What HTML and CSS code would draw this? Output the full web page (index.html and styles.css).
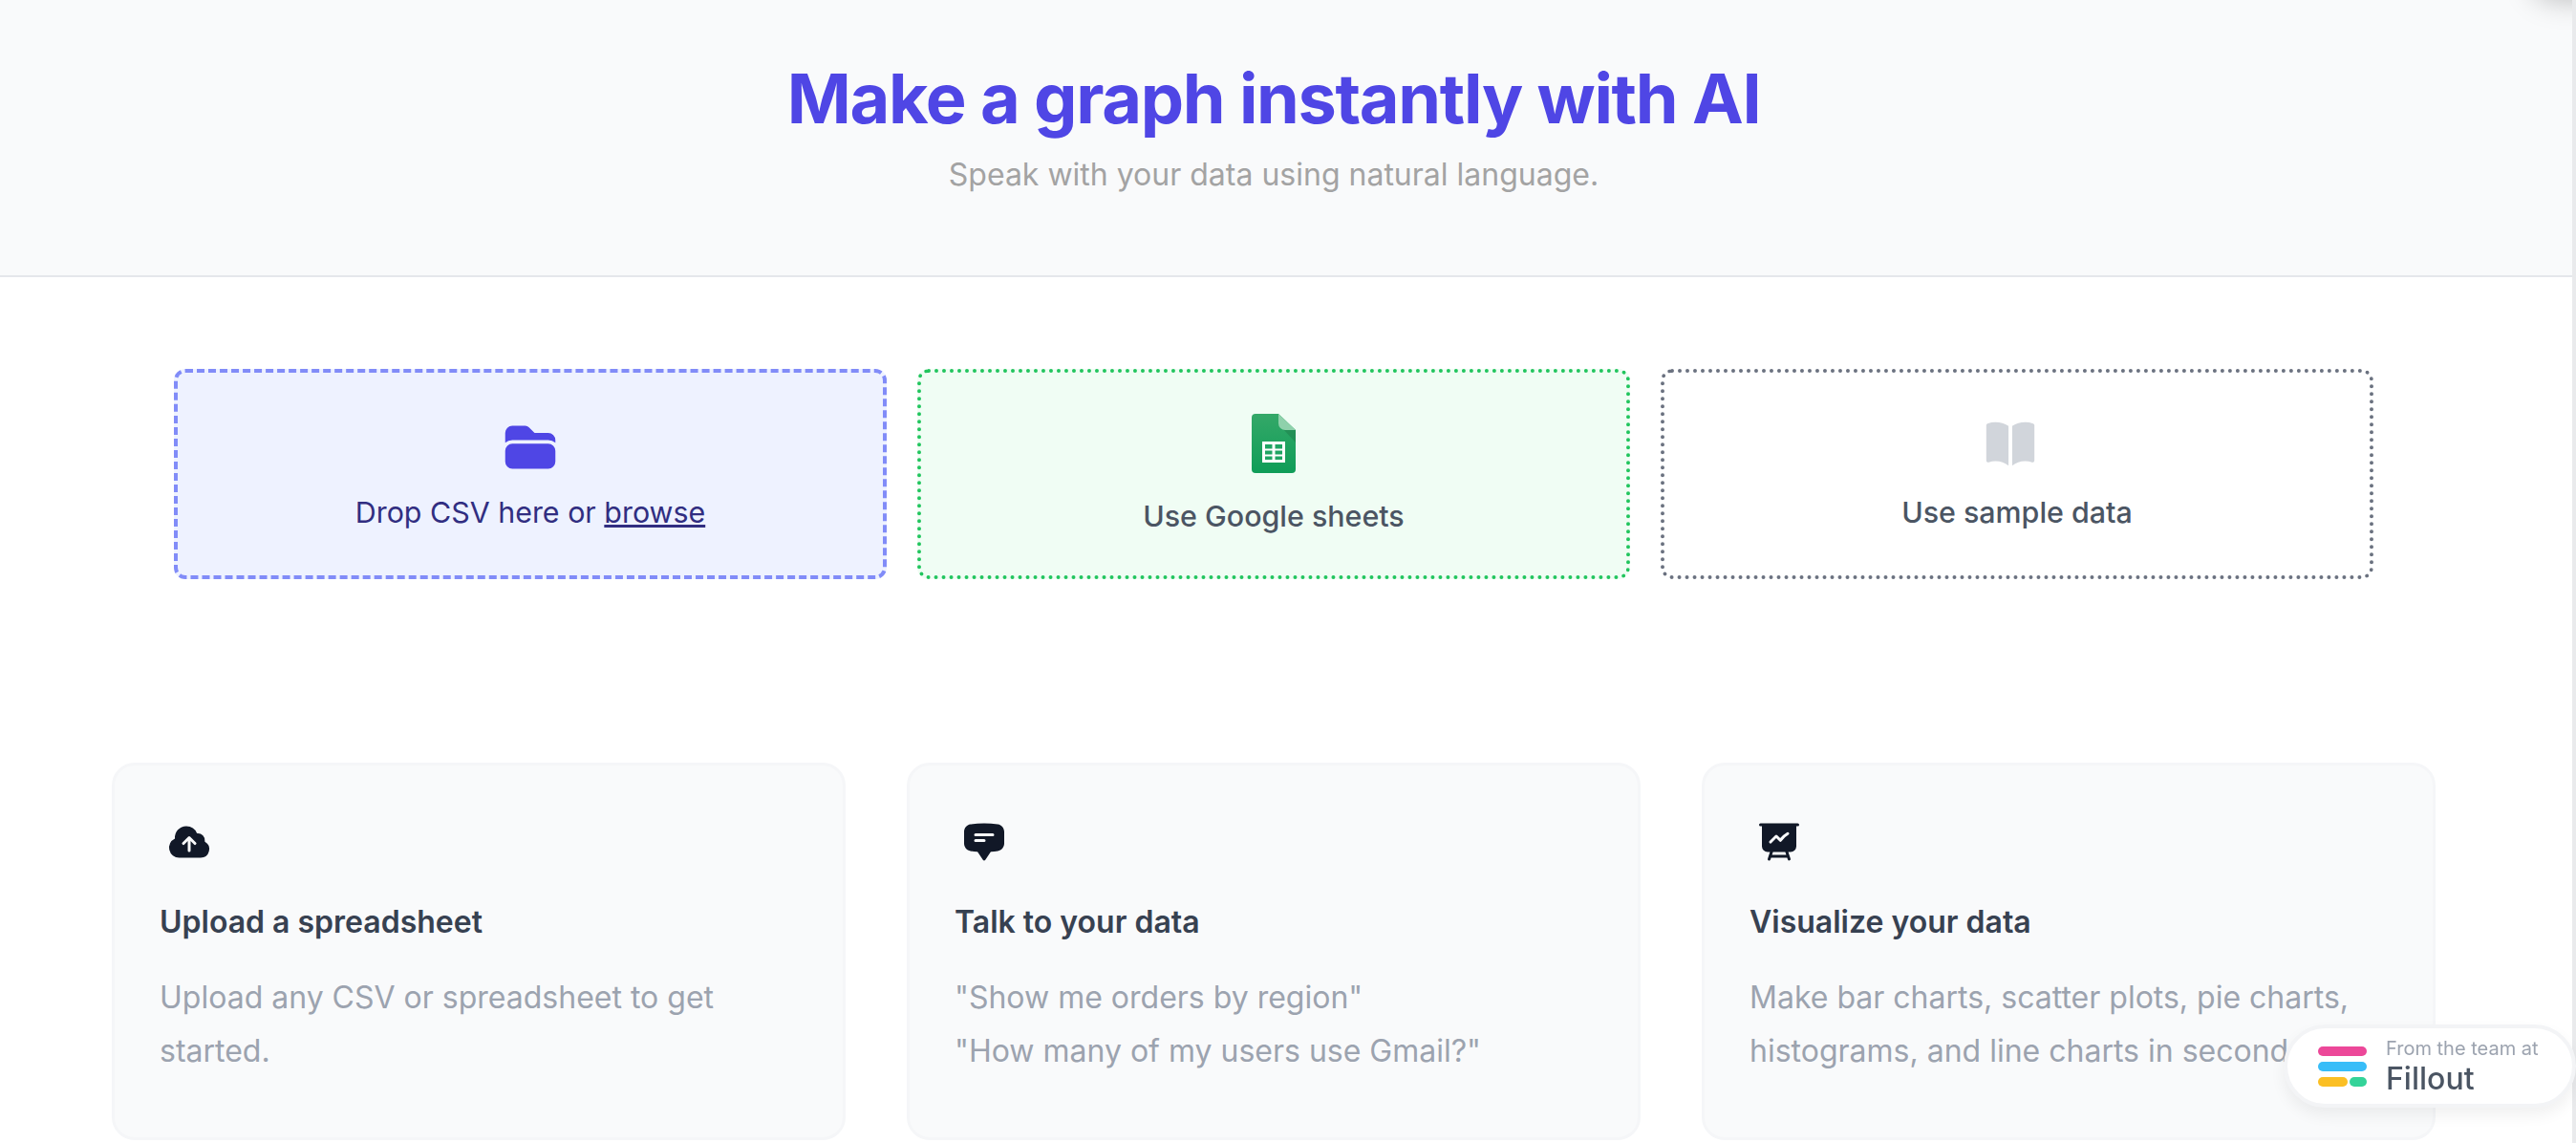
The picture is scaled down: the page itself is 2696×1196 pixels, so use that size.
FILE: index.html
```html
<!DOCTYPE html>
<html>
<head>
  <meta charset="UTF-8">
  <meta name="viewport" content="width=device-width, initial-scale=1.0">
  <link rel="stylesheet" href="styles.css">
</head>
<body>
  <div class="page">
    <div class="main">
      <div class="corner-shadow"></div>

      <header class="hero">
        <div class="hero-inner">
          <h1 class="hero-title">Make a graph instantly with AI</h1>
          <p class="hero-sub">Speak with your data using natural language.</p>
        </div>
      </header>

      <section class="sources">
        <div class="source source-csv">
          <svg class="icon-folder" viewBox="0 0 24 24" fill="currentColor"><path d="M19.5 21a3 3 0 003-3v-4.5a3 3 0 00-3-3h-15a3 3 0 00-3 3V18a3 3 0 003 3h15zM1.5 10.146V6a3 3 0 013-3h5.379a2.25 2.25 0 011.59.659l2.122 2.121c.14.141.331.22.53.22H19.5a3 3 0 013 3v1.146A4.483 4.483 0 0019.5 9h-15a4.483 4.483 0 00-3 1.146z"/></svg>
          <p class="source-csv-text">Drop CSV here or <a href="#">browse</a></p>
        </div>

        <div class="source source-sheets">
          <svg class="icon-sheets" viewBox="0 0 46 62">
            <defs>
              <linearGradient id="sheetFill" x1="0" y1="0" x2="0" y2="1">
                <stop offset="0" stop-color="#34a868"/>
                <stop offset="1" stop-color="#0f9d58"/>
              </linearGradient>
            </defs>
            <path d="M4 0H28L46 17V58a4 4 0 01-4 4H4a4 4 0 01-4-4V4a4 4 0 014-4z" fill="url(#sheetFill)"/>
            <path d="M32 15L46 30V17H36z" fill="#1f7f4d" opacity="0.55"/>
            <path d="M28 0L46 17H35a7 7 0 01-7-7z" fill="#8fd1ab"/>
            <path d="M11 29H35V51H11z" fill="#fff"/>
            <path d="M14 32H21.5V36.5H14zM24.5 32H32V36.5H24.5zM14 38.5H21.5V42.5H14zM24.5 38.5H32V42.5H24.5zM14 44.5H21.5V48H14zM24.5 44.5H32V48H24.5z" fill="#1fa463"/>
          </svg>
          <p class="source-label source-label-sheets">Use Google sheets</p>
        </div>

        <div class="source source-sample">
          <svg class="icon-book" viewBox="0 0 24 24" fill="currentColor"><path d="M11.25 4.533A9.707 9.707 0 006 3a9.735 9.735 0 00-3.25.555.75.75 0 00-.5.707v14.25a.75.75 0 001 .707A8.237 8.237 0 016 18.75c1.995 0 3.823.707 5.25 1.886V4.533zM12.75 20.636A8.214 8.214 0 0118 18.75c.966 0 1.89.166 2.75.47a.75.75 0 001-.708V4.262a.75.75 0 00-.5-.707A9.735 9.735 0 0018 3a9.707 9.707 0 00-5.25 1.533v16.103z"/></svg>
          <p class="source-label source-label-sample">Use sample data</p>
        </div>
      </section>

      <section class="features">
        <div class="feature">
          <svg class="feature-icon" viewBox="0 0 24 24" fill="currentColor"><path fill-rule="evenodd" d="M10.5 3.75a6 6 0 00-5.98 6.496A5.25 5.25 0 006.75 20.25H18a4.5 4.5 0 002.206-8.423 3.75 3.75 0 00-4.133-4.303A6.001 6.001 0 0010.5 3.75zm2.03 5.47a.75.75 0 00-1.06 0l-3 3a.75.75 0 101.06 1.06l1.72-1.72v4.94a.75.75 0 001.5 0v-4.94l1.72 1.72a.75.75 0 101.06-1.06l-3-3z" clip-rule="evenodd"/></svg>
          <h3 class="feature-title">Upload a spreadsheet</h3>
          <p class="feature-text">Upload any CSV or spreadsheet to get started.</p>
        </div>

        <div class="feature">
          <svg class="feature-icon" viewBox="0 0 24 24" fill="currentColor"><path fill-rule="evenodd" d="M4.848 2.771A49.144 49.144 0 0112 2.25c2.43 0 4.817.178 7.152.52 1.978.292 3.348 2.024 3.348 3.97v6.02c0 1.946-1.37 3.678-3.348 3.97a48.901 48.901 0 01-3.476.383.39.39 0 00-.297.17l-2.755 4.133a.75.75 0 01-1.248 0l-2.755-4.133a.39.39 0 00-.297-.17 48.9 48.9 0 01-3.476-.384c-1.978-.29-3.348-2.024-3.348-3.97V6.741c0-1.946 1.37-3.68 3.348-3.97zM6.75 8.25a.75.75 0 01.75-.75h9a.75.75 0 010 1.5h-9a.75.75 0 01-.75-.75zm.75 2.25a.75.75 0 000 1.5H12a.75.75 0 000-1.5H7.5z" clip-rule="evenodd"/></svg>
          <h3 class="feature-title">Talk to your data</h3>
          <p class="feature-text">"Show me orders by region"<br>"How many of my users use Gmail?"</p>
        </div>

        <div class="feature">
          <svg class="feature-icon" viewBox="0 0 24 24" fill="currentColor"><path fill-rule="evenodd" d="M2.25 2.25a.75.75 0 000 1.5H3v10.5a3 3 0 003 3h1.21l-1.172 3.513a.75.75 0 001.424.474l.329-.987h8.418l.33.987a.75.75 0 001.422-.474l-1.17-3.513H18a3 3 0 003-3V3.75h.75a.75.75 0 000-1.5H2.25zm6.54 15h6.42l.5 1.5H8.29l.5-1.5zm8.085-8.995a.75.75 0 10-.75-1.299 12.81 12.81 0 00-3.558 3.05L11.03 8.47a.75.75 0 00-1.06 0l-3 3a.75.75 0 101.06 1.06l2.47-2.47 1.617 1.618a.75.75 0 001.146-.102 11.312 11.312 0 013.612-3.321z" clip-rule="evenodd"/></svg>
          <h3 class="feature-title">Visualize your data</h3>
          <p class="feature-text">Make bar charts, scatter plots, pie charts, histograms, and line charts in seconds.</p>
        </div>
      </section>
    </div>

    <div class="scrollbar"></div>
  </div>

  <div class="badge">
    <div class="badge-logo">
      <span class="bar bar-pink"></span>
      <span class="bar bar-blue"></span>
      <span class="bar-row">
        <span class="bar bar-yellow"></span>
        <span class="bar bar-green"></span>
      </span>
    </div>
    <div class="badge-text">
      <span class="badge-from">From the team at</span>
      <span class="badge-name">Fillout</span>
    </div>
  </div>
</body>
</html>
```

FILE: styles.css
```css
* {
    box-sizing: border-box;
}

html, body {
    height: 100%;
}

body {
    margin: 0;
    overflow: hidden;
    background: #fff;
    font-family: Inter, "Noto Sans", sans-serif;
}

p, h1, h3 {
    margin: 0;
}

.page {
    display: flex;
    height: 100%;
}

.main {
    flex: 1;
    position: relative;
    overflow: hidden;
}

.scrollbar {
    width: 4px;
    background: #e9eaec;
}

/* something sits just off the top edge, only its shadow shows */
.corner-shadow {
    position: absolute;
    top: -58px;
    right: -58px;
    width: 100px;
    height: 50px;
    border-radius: 24px;
    box-shadow: 0 8px 30px rgba(0, 0, 0, 0.25);
}

.hero {
    height: 290px;
    padding-right: 26px;
    background: #f9fafb;
    border-bottom: 2px solid #e5e7eb;
}

.hero-inner {
    padding-top: 58px;
    text-align: center;
}

.hero-title {
    font-size: 72px;
    line-height: 90px;
    font-weight: 700;
    letter-spacing: -1.35px;
    color: #4f46e5;
}

.hero-sub {
    margin-top: 13px;
    font-size: 32px;
    line-height: 44px;
    color: #a3a3a3;
}

.sources {
    display: grid;
    grid-template-columns: repeat(3, 1fr);
    gap: 32px;
    width: 2302px;
    margin: 96px 0 0 182px;
}

.source {
    display: flex;
    flex-direction: column;
    align-items: center;
    height: 220px;
    border-radius: 12px;
    border-width: 4px;
}

.source-csv {
    padding-top: 48px;
    background: #eef2ff;
    border-style: dashed;
    border-color: #818cf8;
}

.source-sheets {
    padding-top: 43px;
    background: #f0fdf4;
    border-style: dotted;
    border-color: #22c55e;
}

.source-sample {
    padding-top: 44px;
    background: #fff;
    border-style: dotted;
    border-color: #6b7280;
}

.icon-folder {
    width: 60px;
    height: 60px;
    color: #4f46e5;
}

.icon-sheets {
    width: 46px;
    height: 62px;
}

.icon-book {
    width: 62px;
    height: 62px;
    margin-right: 14px;
    color: #d1d5db;
}

.source-csv-text {
    margin-top: 16px;
    font-size: 30.4px;
    line-height: 44px;
    color: #312e81;
}

.source-csv-text a {
    color: inherit;
}

.source-label {
    font-size: 30.4px;
    line-height: 44px;
    font-weight: 500;
    color: #4b5563;
}

.source-label-sheets {
    margin-top: 23px;
}

.source-label-sample {
    margin-top: 18px;
}

.features {
    display: grid;
    grid-template-columns: repeat(3, 1fr);
    gap: 64px;
    width: 2432px;
    margin: 192px 0 0 117px;
}

.feature {
    height: 395px;
    padding: 56px 47px 47px;
    background: #f9fafb;
    border: 3px solid #f5f6f8;
    border-radius: 24px;
}

.feature-icon {
    display: block;
    width: 48px;
    height: 48px;
    margin-left: 7px;
    color: #111827;
}

.feature-title {
    margin-top: 36px;
    font-size: 32px;
    line-height: 48px;
    font-weight: 600;
    color: #374151;
}

.feature-text {
    margin-top: 27px;
    font-size: 32px;
    line-height: 56px;
    color: #9ca3af;
}

.badge {
    position: fixed;
    right: 0;
    bottom: 37px;
    display: flex;
    align-items: center;
    gap: 20px;
    width: 306px;
    height: 87px;
    padding-left: 32px;
    background: #fff;
    border: 4px solid #f3f4f6;
    border-radius: 44px;
    box-shadow: 0 8px 16px rgba(0, 0, 0, 0.06);
}

.badge-logo {
    display: flex;
    flex-direction: column;
    gap: 6px;
    width: 51px;
}

.bar {
    display: block;
    height: 10px;
    border-radius: 5px;
}

.bar-row {
    display: flex;
    gap: 2px;
}

.bar-pink { background: #ec4899; }
.bar-blue { background: #38bdf8; }
.bar-yellow { width: 31px; background: #fbbf24; }
.bar-green { flex: 1; background: #34d399; }

.badge-text {
    display: flex;
    flex-direction: column;
}

.badge-from {
    font-size: 20px;
    line-height: 26px;
    color: #9ca3af;
}

.badge-name {
    font-size: 32px;
    line-height: 38px;
    font-weight: 500;
    color: #4b5563;
}
```
